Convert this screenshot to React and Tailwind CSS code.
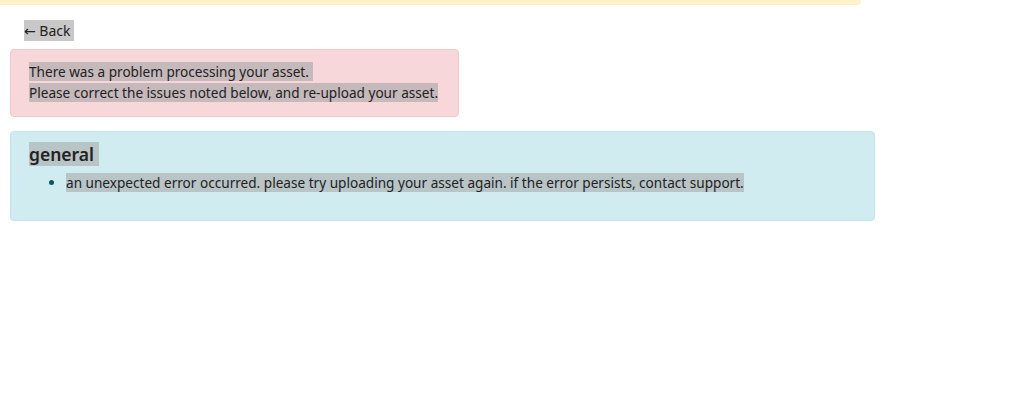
import React from 'react';

const font = { fontFamily: '"Noto Sans", "Open Sans", sans-serif' };

export default function App() {
  return (
    <div className="min-h-[402px] bg-white text-[13.6px] text-[#222]" style={font}>
      {/* bottom edge of a warning alert scrolled off the top */}
      <div className="h-[5px] w-[861px] rounded-br-[4px] border-b border-[#ffeeba] bg-[#fff3cd]" />

      <div className="px-[10px]">
        <div className="pl-[14px] pt-[15px]">
          <a className="inline-block h-[21px] bg-[#c8c8c8] pr-[3px] text-[14px] leading-[21px] text-[#222]">
            <span className="font-['DejaVu_Sans']">←</span> Back
          </a>
        </div>

        {/* error alert */}
        <div className="mt-[8px] inline-block rounded-[4px] border border-[#f5c6cb] bg-[#f8d7da] pl-[18px] pr-[20px] pt-[11px] pb-[13px] leading-[21px]">
          <span className="bg-[#c6b9bb] pr-[4px]">There was a problem processing your asset.</span>
          <br />
          <span className="bg-[#c6b9bb]">Please correct the issues noted below, and re-upload your asset.</span>
        </div>

        {/* issue list */}
        <div className="mt-[14px] w-[865px] rounded-[4px] border border-[#bee5eb] bg-[#d1ecf1] px-[18px] pt-[10px] pb-[11px]">
          <h4 className="text-[17.5px] font-semibold leading-[24px]">
            <span className="bg-[#b9c4c6] pr-[5px]">general</span>
          </h4>
          <ul className="mt-[6px] mb-[16px] list-disc pl-[37px] leading-[21px] marker:text-[#0c5460]">
            <li>
              <span className="bg-[#b9c4c6]">
                an unexpected error occurred. please try uploading your asset again. if the error persists, contact support.
              </span>
            </li>
          </ul>
        </div>
      </div>
    </div>
  );
}
